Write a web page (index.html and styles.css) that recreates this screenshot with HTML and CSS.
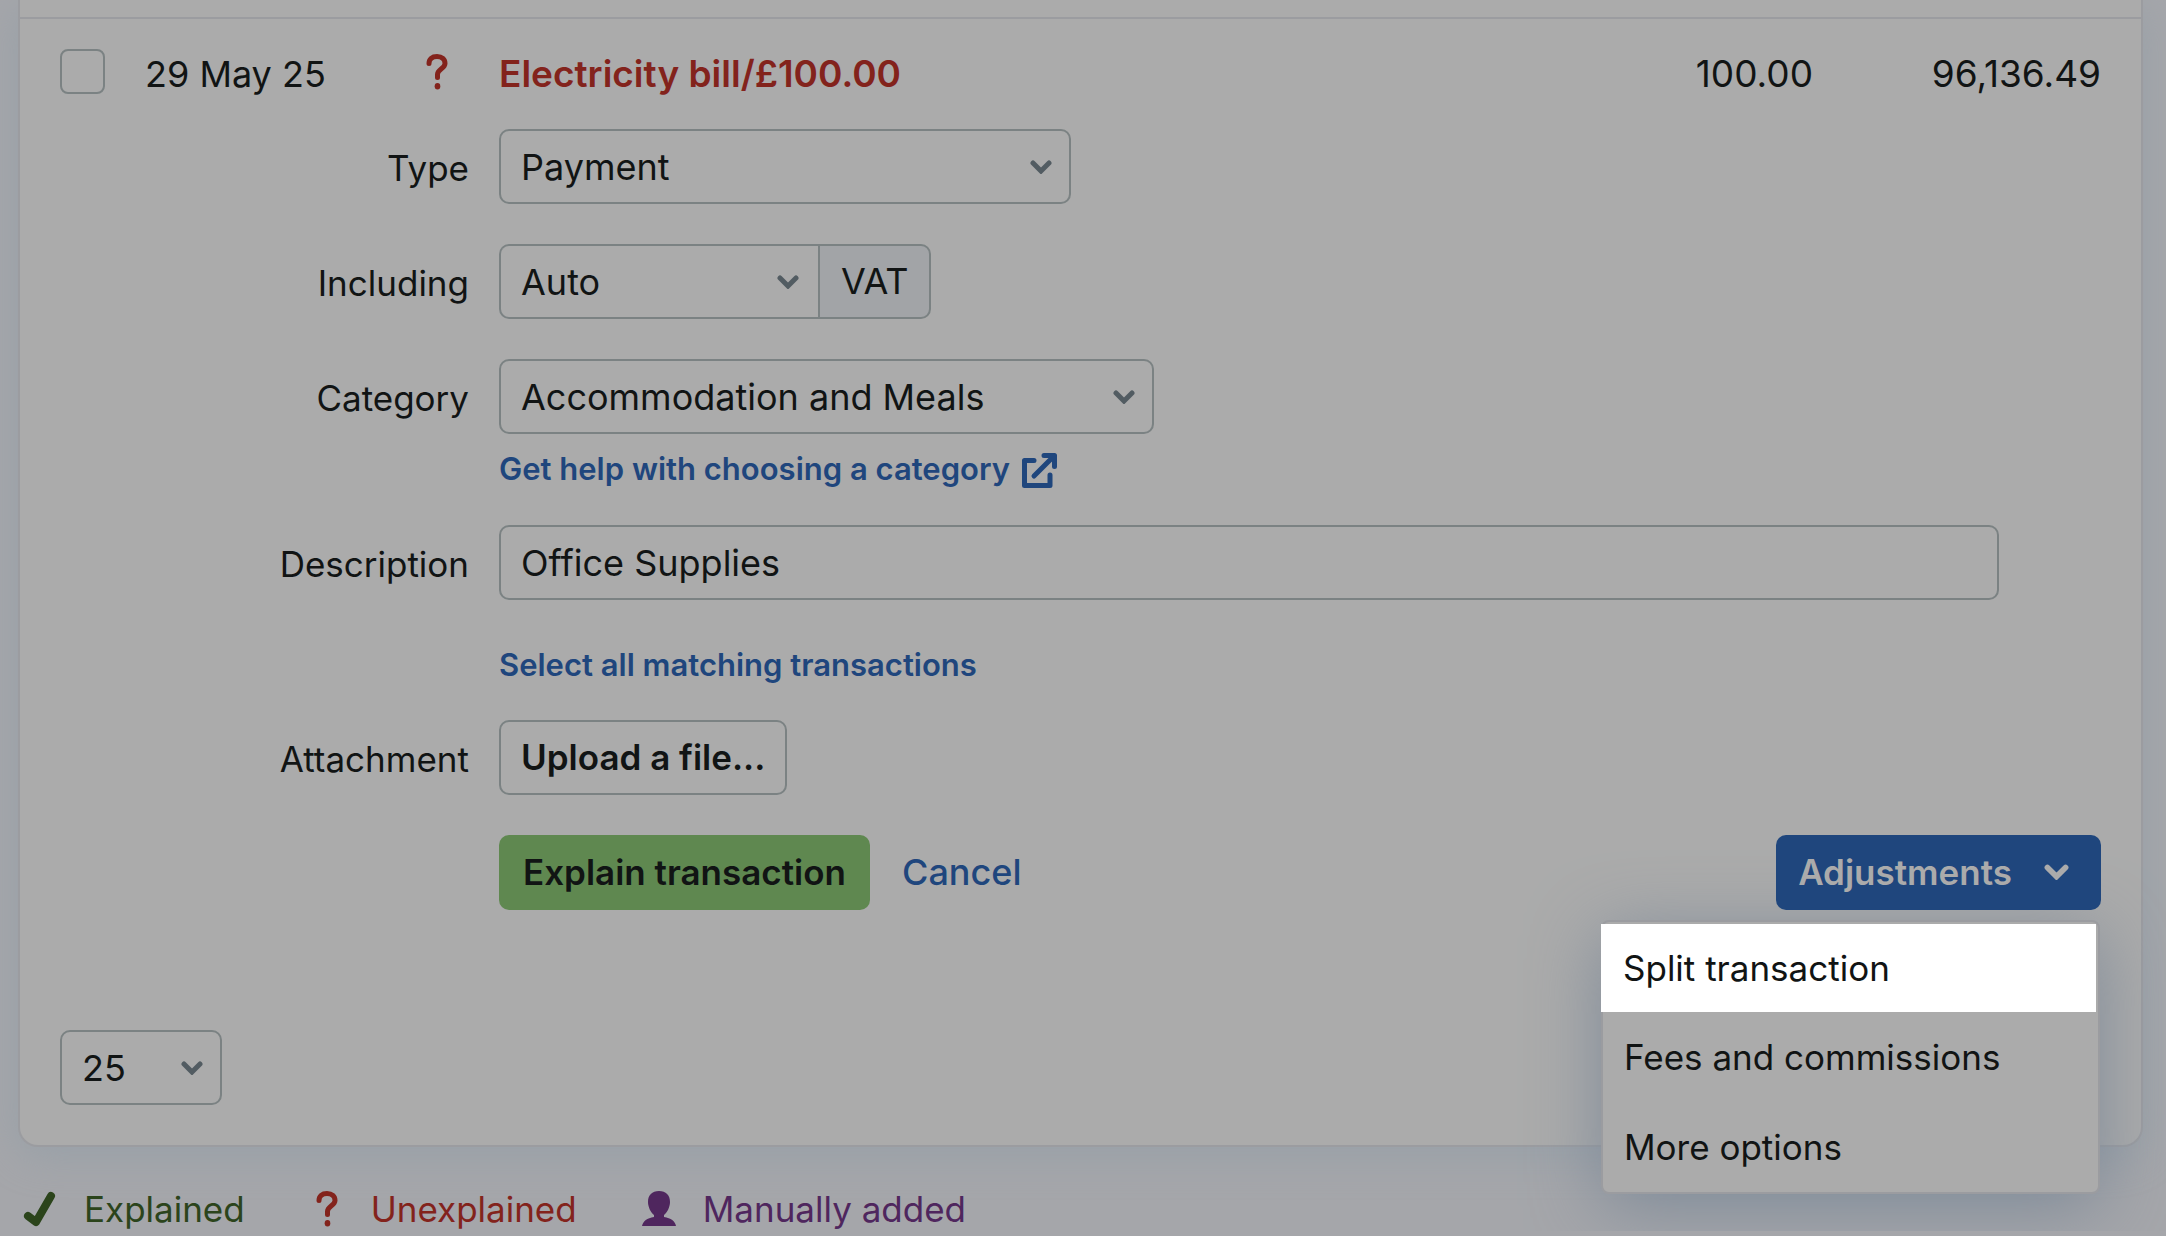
FILE: index.html
```html
<!DOCTYPE html>
<html lang="en">
    <head>
        <meta charset="UTF-8">
        <title>Bank transactions</title>
        <link rel="stylesheet" href="styles.css">
    </head>
    <body>
        <svg class="sprite" aria-hidden="true">
            <symbol id="chevron" viewBox="0 0 22 14">
                <path d="M3 3l8 8 8-8" fill="none" stroke="currentColor" stroke-width="5" stroke-linecap="round" stroke-linejoin="miter"/>
            </symbol>
            <symbol id="question" viewBox="0 0 22 36">
                <path d="M3 9.500C3 5 6 2.500 11 2.500s8 2.800 8 7c0 5-7.500 5.500-7.500 11v3" fill="none" stroke="currentColor" stroke-width="5" stroke-linecap="round"/>
                <ellipse cx="11.500" cy="32.300" rx="2.800" ry="3.200" fill="currentColor"/>
            </symbol>
        </svg>
        <main class="panel">
            <table class="transactions">
                <tr>
                    <td class="tick"><input type="checkbox" aria-label="Select transaction"></td>
                    <td class="date">29 May 25</td>
                    <td class="status"><svg class="icon-question"><use href="#question"/></svg></td>
                    <td class="name">Electricity bill/£100.00</td>
                    <td class="amount">100.00</td>
                    <td class="balance">96,136.49</td>
                </tr>
            </table>
            <form class="explain">
                <div class="row">
                    <label for="type">Type</label>
                    <div class="select type">
                        <select id="type"><option>Payment</option></select>
                        <svg class="chevron"><use href="#chevron"/></svg>
                    </div>
                </div>
                <div class="row">
                    <label for="vat">Including</label>
                    <div class="group">
                        <div class="select vat">
                            <select id="vat"><option>Auto</option></select>
                            <svg class="chevron"><use href="#chevron"/></svg>
                        </div>
                        <span class="addon">VAT</span>
                    </div>
                </div>
                <div class="row">
                    <label for="category">Category</label>
                    <div class="select category">
                        <select id="category"><option>Accommodation and Meals</option></select>
                        <svg class="chevron"><use href="#chevron"/></svg>
                    </div>
                </div>
                <div class="help">
                    <a href="#">Get help with choosing a category
                        <svg class="icon-external" viewBox="0 0 36 36">
                            <path d="M13 8.500H3.500v25H29V23M13 24L32 5M23 3.500h10.500v11" fill="none" stroke="currentColor" stroke-width="5" stroke-linecap="round" stroke-linejoin="round"/>
                        </svg></a>
                </div>
                <div class="row">
                    <label for="description">Description</label>
                    <input class="text" id="description" type="text" value="Office Supplies">
                </div>
                <div class="matching">
                    <a href="#">Select all matching transactions</a>
                </div>
                <div class="row">
                    <label for="upload">Attachment</label>
                    <button class="btn upload" id="upload" type="button">Upload a file...</button>
                </div>
                <div class="actions">
                    <button class="btn primary" type="button">Explain transaction</button>
                    <a class="cancel" href="#">Cancel</a>
                    <div class="dropdown">
                        <button class="btn adjust" type="button">Adjustments
                            <svg class="chevron-light"><use href="#chevron"/></svg></button>
                        <div class="menu">
                            <button class="current" type="button">Split transaction</button>
                            <button type="button">Fees and commissions</button>
                            <button type="button">More options</button>
                        </div>
                    </div>
                </div>
            </form>
            <div class="select pager">
                <select aria-label="Rows per page"><option>25</option></select>
                <svg class="chevron"><use href="#chevron"/></svg>
            </div>
        </main>
        <footer class="legend">
            <span class="explained">
                <svg class="legend-icon" viewBox="0 0 36 36">
                    <path d="M6 25l8 6L29 5" fill="none" stroke="currentColor" stroke-width="8" stroke-linecap="round" stroke-linejoin="round"/>
                </svg>
                Explained
            </span>
            <span class="unexplained">
                <svg class="legend-icon"><use href="#question"/></svg>
                Unexplained
            </span>
            <span class="manual">
                <svg class="legend-icon" viewBox="0 0 36 36">
                    <path d="M18 0c7 0 11 4 11 11 0 5-3 11-6 13v2c7 1 11 4 12 9H1c1-5 5-8 12-9v-2c-3-2-6-8-6-13C7 4 11 0 18 0z" fill="currentColor"/>
                </svg>
                Manually added
            </span>
        </footer>
    </body>
</html>
```

FILE: styles.css
```css
* {
    box-sizing: border-box;
}
body {
    margin: 0;
    padding: 0 23px 0 18px;
    font: 36px/44px Inter, "Liberation Sans", sans-serif;
    color: #111414;
    background: #a5a6aa;
    overflow: hidden;
}
a {
    color: #1f467d;
    text-decoration: none;
}
input, select, button {
    font: inherit;
    color: inherit;
    margin: 0;
}
.sprite {
    position: absolute;
    width: 0;
    height: 0;
}
.panel {
    padding: 17px 0 40px;
    background: #ababab;
    border: 2px solid #9b9ca0;
    border-top: 0;
    border-radius: 0 0 20px 20px;
    box-shadow: 0 8px 40px #97a0a8;
}

/* transaction row */
.transactions {
    width: 100%;
    border-collapse: collapse;
    table-layout: fixed;
    border-top: 2px solid #9b9ca0;
}
.transactions td {
    height: 111px;
    padding: 33px 0 0;
    vertical-align: top;
}
.transactions .tick {
    width: 125px;
    padding: 30px 0 0 40px;
}
.tick input {
    display: block;
    appearance: none;
    width: 45px;
    height: 45px;
    border: 2px solid #7b8283;
    border-radius: 8px;
}
.date {
    width: 281px;
}
.status {
    width: 73px;
}
.icon-question {
    display: block;
    width: 22px;
    height: 36px;
    margin-top: 2px;
    color: #83231c;
}
.name {
    font-size: 37px;
    font-weight: 600;
    color: #83231c;
}
.amount, .balance {
    font-size: 37px;
    text-align: right;
}
.amount {
    width: 300px;
}
.transactions .balance {
    width: 328px;
    padding-right: 40px;
}

/* explain form */
.explain {
    padding: 0 40px;
}
.row {
    display: grid;
    grid-template-columns: 409px 1fr;
    column-gap: 30px;
    align-items: center;
    justify-items: start;
    margin-bottom: 40px;
}
.row label {
    justify-self: end;
    padding-top: 2px;
    font-size: 35px;
}
.select {
    position: relative;
}
select, .text {
    display: block;
    appearance: none;
    width: 100%;
    height: 75px;
    padding: 0 20px;
    background: transparent;
    border: 2px solid #7b8283;
    border-radius: 10px;
}
.chevron {
    position: absolute;
    top: 31px;
    right: 19px;
    width: 22px;
    height: 14px;
    color: #525c62;
    pointer-events: none;
}
.type {
    width: 572px;
}
.group {
    display: flex;
}
.vat {
    width: 319px;
}
.vat select {
    border-right: 0;
    border-radius: 10px 0 0 10px;
}
.addon {
    padding: 13px 21px 14px;
    background: #a2a4a7;
    border: 2px solid #7b8283;
    border-radius: 0 10px 10px 0;
}
.category {
    width: 655px;
}
.text {
    max-width: 1500px;
}
.help, .matching {
    padding-left: 439px;
    font-size: 31px;
    font-weight: 600;
}
.help {
    height: 91px;
    margin-top: -40px;
    padding-top: 13px;
}
.icon-external {
    width: 36px;
    height: 36px;
    margin-left: 3px;
    vertical-align: -8px;
}
.matching {
    height: 80px;
    padding-top: 3px;
}
.btn {
    height: 75px;
    padding: 0 22px 2px;
    font-size: 35px;
    font-weight: 600;
    border: 0;
    border-radius: 10px;
}
.upload {
    padding: 0 20px 2px;
    background: transparent;
    border: 2px solid #7b8283;
}
.actions {
    display: flex;
    align-items: center;
    padding-left: 439px;
}
.primary {
    padding: 0 24px 2px;
    background: #5f8850;
}
.cancel {
    margin-left: 32px;
    padding-bottom: 2px;
    font-weight: 500;
}
.dropdown {
    position: relative;
    margin-left: auto;
}
.adjust {
    position: relative;
    z-index: 1;
    display: flex;
    align-items: center;
    gap: 32px;
    padding-right: 32px;
    color: #ababab;
    background: #1f467d;
}
.chevron-light {
    width: 25px;
    height: 16px;
}
.menu {
    position: absolute;
    top: 85px;
    right: 1px;
    width: 499px;
    padding: 2px 2px 0 0;
    background: #ababab;
    border: 2px solid #9b9ca0;
    border-radius: 8px;
    box-shadow: 0 14px 70px #7f8b99;
}
.menu button {
    display: block;
    width: 100%;
    height: 90px;
    padding: 0 21px;
    font-size: 35px;
    text-align: left;
    background: transparent;
    border: 0;
}
/* highlighted item runs over the menu's left border */
.menu .current {
    width: calc(100% + 2px);
    height: 88px;
    margin-left: -2px;
    padding-left: 22px;
    background: #fff;
}
.pager {
    width: 162px;
    margin: 120px 0 0 40px;
}

/* legend */
.legend {
    display: flex;
    gap: 64px;
    padding: 40px 4px 0;
    font-size: 35px;
}
.legend span {
    display: flex;
    align-items: center;
    gap: 26px;
}
.legend-icon {
    width: 36px;
    height: 36px;
}
.explained {
    color: #2b441b;
}
.unexplained {
    color: #83231c;
}
.manual {
    color: #4f265e;
}
```
